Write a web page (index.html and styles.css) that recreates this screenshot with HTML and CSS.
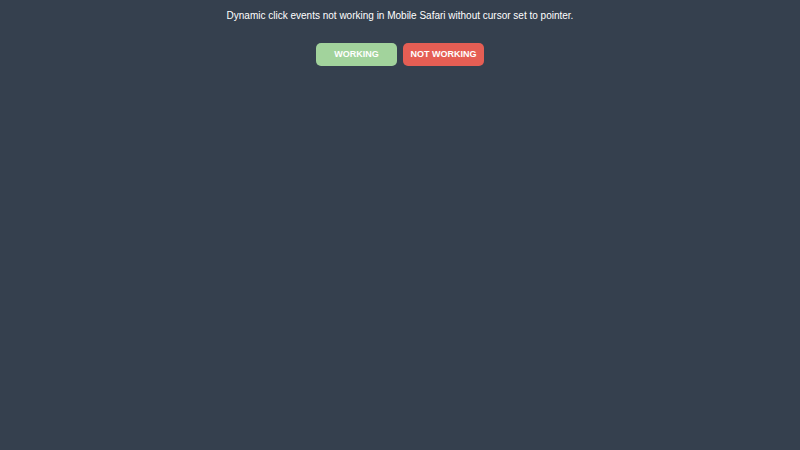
FILE: index.html
```html
<!DOCTYPE html>
<html lang="en">
<head>
  <meta charset="UTF-8">
  <meta name="viewport" content="width=device-width, initial-scale=1.0">
  <title>Mobile Safari click events</title>
  <link rel="stylesheet" href="styles.css">
</head>
<body>
<p class="intro">Dynamic click events not working in Mobile Safari without cursor set to pointer.</p>
<div class="buttons">
  <button type="button" class="btn working">Working</button>
  <button type="button" class="btn not-working">Not working</button>
</div>

<script>
  document.addEventListener('click', function (e) {
    if (e.target.classList.contains('btn')) {
      alert(e.target.textContent);
    }
  });
</script>
</body>
</html>
```

FILE: styles.css
```css
body {
  margin: 8px;
  background: #35404e;
  color: #fff;
  font-family: "Liberation Sans", Arial, sans-serif;
  font-size: 10px;
  line-height: 15px;
  text-align: center;
}
.intro {
  margin: 0 0 20px;
}
.buttons {
  display: flex;
  justify-content: center;
  gap: 6px;
}
.btn {
  width: 81px;
  padding: 4px 0;
  border: none;
  border-radius: 5px;
  color: #fff;
  font-family: inherit;
  font-size: 9px;
  font-weight: bold;
  line-height: 15px;
  text-transform: uppercase;
  white-space: nowrap;
}
.working {
  background: #a2d39c;
  cursor: pointer;
}
.not-working {
  background: #e55e54;
}
```
